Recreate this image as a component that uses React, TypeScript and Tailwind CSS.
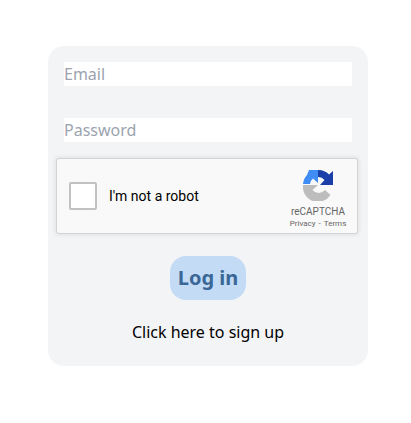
import React from "react";

const RecaptchaLogo = () => (
  <svg viewBox="0 0 30 31" className="w-[30px] h-[31px]" xmlns="http://www.w3.org/2000/svg">
    {/* grey, bottom */}
    <path d="M0 15 L15 15 L9.5 20 A8 8 0 0 0 22 20 L27.5 25 A15 15 0 0 1 0 15 Z" fill="#bdbdbd" />
    {/* blue, top left */}
    <path d="M6 0 L15 0 L15 13 L10 8.5 A8 8 0 0 0 7 14 L0 14 A15 15 0 0 1 4 5 Z" fill="#3f8cf4" />
    {/* dark blue, top right */}
    <path d="M15 0 A15 15 0 0 1 26 4.5 L30 1 L30 15 L17 15 L21.5 10 A8 8 0 0 0 15 7 Z" fill="#1a3fa8" />
  </svg>
);

const App = () => {
  return (
    <div className="w-[411px] h-[423px] bg-white pt-[46px] pl-12 font-['Noto_Sans',sans-serif]">
      <div className="w-80 h-80 rounded-2xl bg-[#f3f4f6] p-4 flex flex-col items-center">
        <input
          type="text"
          placeholder="Email"
          className="w-full h-6 shrink-0 bg-white text-base outline-none placeholder:text-[#9ca3af]"
        />
        <input
          type="password"
          placeholder="Password"
          className="w-full h-6 shrink-0 mt-8 bg-white text-base outline-none placeholder:text-[#9ca3af]"
        />

        {/* reCAPTCHA box */}
        <div className="w-[302px] h-[76px] shrink-0 mt-4 mr-[2px] flex justify-between rounded-[3px] border border-[#d3d3d3] bg-[#f9f9f9] shadow-[0_0_4px_1px_rgba(0,0,0,0.08)] font-['Roboto',sans-serif]">
          <div className="flex items-center">
            <div className="w-7 h-7 ml-3 rounded-[2px] border-2 border-[#c1c1c1] bg-white" />
            <span className="ml-3 text-sm text-black">I'm not a robot</span>
          </div>
          <div className="w-[70px] mr-[4px] mt-[11px] flex flex-col items-center">
            <RecaptchaLogo />
            <span className="mt-[4px] text-[10px] leading-[14px] text-[#666666]">reCAPTCHA</span>
            <span className="flex gap-[3px] text-[8px] leading-[10px] text-[#666666] whitespace-nowrap">
              <span>Privacy</span>
              <span>-</span>
              <span>Terms</span>
            </span>
          </div>
        </div>

        <button className="mt-[22px] w-[76px] h-11 shrink-0 rounded-2xl bg-[#c3dbf5] text-xl font-bold text-[#3a6795]">
          Log in
        </button>
        <p className="mt-5 text-base text-black">Click here to sign up</p>
      </div>
    </div>
  );
};

export default App;
